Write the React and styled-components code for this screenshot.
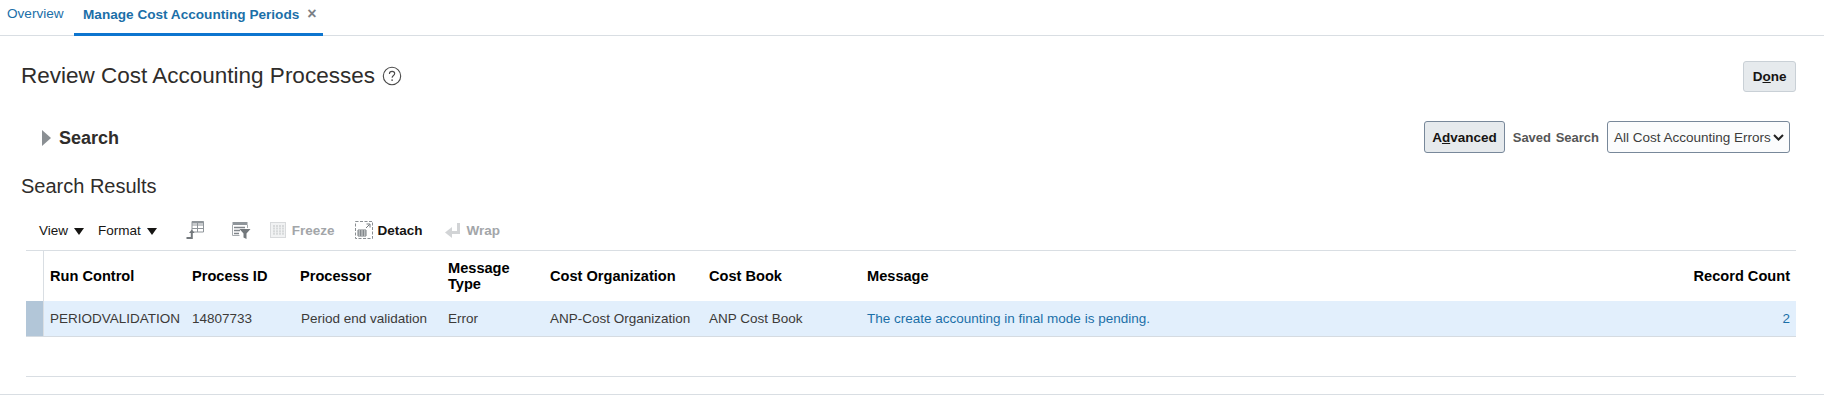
import styled, { createGlobalStyle } from "styled-components";

const GlobalStyle = createGlobalStyle`
  html, body {
    margin: 0;
    padding: 0;
    background: #fff;
    font-family: "Liberation Sans", Arial, sans-serif;
  }
`;

const columns = [
  { key: "runControl", label: "Run Control", value: "PERIODVALIDATION" },
  { key: "processId", label: "Process ID", value: "14807733" },
  { key: "processor", label: "Processor", value: "Period end validation", nudge: 1 },
  { key: "messageType", label: "Message Type", value: "Error", narrow: true },
  { key: "costOrg", label: "Cost Organization", value: "ANP-Cost Organization" },
  { key: "costBook", label: "Cost Book", value: "ANP Cost Book" },
  { key: "message", label: "Message", value: "The create accounting in final mode is pending.", link: true },
  { key: "recordCount", label: "Record Count", value: "2", link: true, right: true },
];

const HelpIcon = () => (
  <svg width="20" height="20" viewBox="0 0 20 20" fill="none">
    <circle cx="10" cy="10" r="8.7" stroke="#4a4a4a" strokeWidth="1.1" />
    <path d="M7.4 7.9c0-1.6 1.2-2.5 2.7-2.5s2.6.9 2.6 2.2c0 1.9-2.6 2-2.6 4.2" stroke="#4a4a4a" strokeWidth="1.1" />
    <rect x="9.4" y="13.4" width="1.4" height="1.5" fill="#4a4a4a" />
  </svg>
);

const ColumnsIcon = () => (
  <svg width="18" height="18" viewBox="0 0 18 18" fill="none">
    <path d="M6 .5h11.5v10.5H6z M6 4h11.5 M6 7.5h11.5 M11.5 .5v10.5" stroke="#8f959a" />
    <path d="M6 .5h11.5V2.5H6z" fill="#8f959a" />
    <path d="M.5 17h5.3v-6" stroke="#73787c" strokeWidth="2" />
    <path d="M3 12l2.8-3.5L8.6 12z" fill="#73787c" />
  </svg>
);

const FilterIcon = () => (
  <svg width="19" height="17" viewBox="0 0 19 17" fill="none">
    <path d="M.5 0h15v3H.5z" fill="#8f959a" />
    <path d="M.5 3v10.5h7 M15.5 3v3" stroke="#a6abaf" />
    <path d="M2 5.5h11 M2 8.5h6 M2 11.5h5" stroke="#80858a" strokeWidth="1.4" />
    <path d="M7.5 7h11l-4 4.5V17l-3-1.5v-4z" fill="#73787c" />
  </svg>
);

const FreezeIcon = () => (
  <svg width="16" height="16" viewBox="0 0 16 16" fill="none">
    <rect x="0.5" y="0.5" width="15" height="15" fill="#f1f2f3" stroke="#d8dadc" />
    <path d="M4 3v10 M7 3v10 M10 3v10 M13 3v10" stroke="#c6c9cb" strokeWidth="1.2" strokeDasharray="2 .6" />
  </svg>
);

const DetachIcon = () => (
  <svg width="18" height="18" viewBox="0 0 18 18" fill="none">
    <rect x="0.5" y="0.5" width="17" height="17" stroke="#8a8f93" strokeDasharray="3 1.5" />
    <path d="M3 9h8v6H3z M3 11h8 M3 13h8 M5.7 9v6 M8.3 9v6" stroke="#777c80" />
    <path d="M11 7l3.5-3.5 M11.5 3H15v3.5" stroke="#777c80" />
  </svg>
);

const WrapIcon = () => (
  <svg width="16" height="16" viewBox="0 0 16 16" fill="none">
    <path d="M13.5 1v9.5H6" stroke="#d2d4d6" strokeWidth="3" />
    <path d="M7 5v11L0 10.500z" fill="#d2d4d6" />
  </svg>
);

const Caret = () => (
  <svg width="10" height="7" viewBox="0 0 10 7">
    <path d="M0 0h10L5 7z" fill="#161513" />
  </svg>
);

const App = () => (
  <Page>
    <GlobalStyle />
    <TabBar>
      <Tab>Overview</Tab>
      <Tab $active>
        Manage Cost Accounting Periods
        <CloseMark>×</CloseMark>
      </Tab>
    </TabBar>

    <TitleRow>
      <TitleGroup>
        <Title>Review Cost Accounting Processes</Title>
        <HelpIcon />
      </TitleGroup>
      <Button $flat>
        D<u>o</u>ne
      </Button>
    </TitleRow>

    <SearchRow>
      <SearchToggle>
        <DisclosureArrow />
        <SearchLabel>Search</SearchLabel>
      </SearchToggle>
      <SearchControls>
        <Button>
          A<u>d</u>vanced
        </Button>
        <SavedLabel>Saved Search</SavedLabel>
        <SavedSelect>
          All Cost Accounting Errors
          <svg width="11" height="7" viewBox="0 0 11 7" fill="none">
            <path d="M1 1l4.5 4.5L10 1" stroke="#222" strokeWidth="2" />
          </svg>
        </SavedSelect>
      </SearchControls>
    </SearchRow>

    <SectionTitle>Search Results</SectionTitle>

    <Toolbar>
      <MenuItem>
        View <Caret />
      </MenuItem>
      <MenuItem>
        Format <Caret />
      </MenuItem>
      <IconSlot $width={46} $left={15}>
        <ColumnsIcon />
      </IconSlot>
      <IconSlot $width={38} $left={0}>
        <FilterIcon />
      </IconSlot>
      <ToolItem $disabled>
        <FreezeIcon />
        Freeze
      </ToolItem>
      <ToolItem $tight>
        <DetachIcon />
        Detach
      </ToolItem>
      <ToolItem $disabled>
        <WrapIcon />
        Wrap
      </ToolItem>
    </Toolbar>

    <ResultsTable>
      <HeaderRow>
        <SelectorHead />
        {columns.map((col) => (
          <HeaderCell key={col.key} $right={col.right} $narrow={col.narrow}>
            {col.label}
          </HeaderCell>
        ))}
      </HeaderRow>
      <DataRow>
        <SelectorCell />
        {columns.map((col) => (
          <DataCell key={col.key} $link={col.link} $right={col.right} $nudge={col.nudge}>
            {col.value}
          </DataCell>
        ))}
      </DataRow>
    </ResultsTable>

    <TableFooter />
    <PageEnd />
  </Page>
);

export default App;

const gridColumns = "18px 142px 108px 148px 102px 159px 158px 1fr 146px";

const Page = styled.div`
  width: 1824px;
  height: 401px;
  overflow: hidden;
  color: #2f2d2b;
`;

const TabBar = styled.div`
  display: flex;
  height: 35px;
  border-bottom: 1px solid #d9dee3;
`;

const Tab = styled.div`
  height: 36px;
  box-sizing: border-box;
  width: ${(p) => (p.$active ? "249px" : "74px")};
  padding: 5px 0 0 ${(p) => (p.$active ? "9px" : "7px")};
  font-size: 13.6px;
  line-height: 17px;
  white-space: nowrap;
  font-weight: ${(p) => (p.$active ? 700 : 400)};
  color: #1b6fa8;
  border-bottom: ${(p) => (p.$active ? "3px solid #0d75cf" : "none")};
`;

const CloseMark = styled.span`
  margin-left: 8px;
  font-size: 16px;
  line-height: 17px;
  font-weight: 700;
  color: #7c8186;
`;

const TitleRow = styled.div`
  display: flex;
  justify-content: space-between;
  align-items: center;
  height: 40px;
  margin-top: 20px;
  padding: 0 28px 0 21px;
`;

const TitleGroup = styled.div`
  display: flex;
  align-items: center;
  gap: 7px;
`;

const Title = styled.h1`
  margin: 0;
  font-size: 22.5px;
  font-weight: 400;
  color: #2f2d2b;
`;

const Button = styled.button`
  height: ${(p) => (p.$flat ? "31px" : "32px")};
  padding: 0 ${(p) => (p.$flat ? "8.500px" : "7px")};
  font-family: inherit;
  font-size: 13.5px;
  font-weight: 700;
  color: #161513;
  background: #e6eaed;
  border: 1px solid ${(p) => (p.$flat ? "#c9d0d6" : "#78889a")};
  border-radius: 3px;
`;

const SearchRow = styled.div`
  display: flex;
  justify-content: space-between;
  align-items: center;
  height: 32px;
  margin-top: 25px;
  padding-left: 42px;
  padding-right: 34px;
`;

const SearchToggle = styled.div`
  display: flex;
  align-items: center;
  gap: 8px;
  margin-top: 2px;
`;

const DisclosureArrow = styled.span`
  width: 0;
  height: 0;
  border-left: 9px solid #8a8f93;
  border-top: 8px solid transparent;
  border-bottom: 8px solid transparent;
`;

const SearchLabel = styled.span`
  font-size: 18px;
  font-weight: 700;
  color: #2f2d2b;
`;

const SearchControls = styled.div`
  display: flex;
  align-items: center;
`;

const SavedLabel = styled.span`
  margin: 0 8px;
  font-size: 13px;
  font-weight: 700;
  white-space: nowrap;
  color: #565656;
  word-spacing: 1px;
`;

const SavedSelect = styled.div`
  display: flex;
  align-items: center;
  justify-content: space-between;
  box-sizing: border-box;
  width: 183px;
  height: 32px;
  padding: 0 5px 0 6px;
  font-size: 13.5px;
  white-space: nowrap;
  color: #3c3c3c;
  background: #fbfcfd;
  border: 1px solid #78889a;
  border-radius: 3px;
`;

const SectionTitle = styled.h2`
  margin: 21px 0 0 21px;
  font-size: 20px;
  line-height: 24px;
  font-weight: 400;
  color: #2f2d2b;
`;

const Toolbar = styled.div`
  display: flex;
  align-items: center;
  height: 26px;
  margin-top: 19px;
  padding-left: 39px;
  font-size: 13.5px;
`;

const MenuItem = styled.div`
  display: flex;
  align-items: center;
  gap: 6px;
  margin-right: 14px;
  color: #161513;

  svg {
    margin-top: 3px;
  }
`;

const IconSlot = styled.div`
  display: flex;
  align-items: center;
  width: ${(p) => p.$width}px;
  margin-left: ${(p) => p.$left}px;
`;

const ToolItem = styled.div`
  display: flex;
  align-items: center;
  gap: ${(p) => (p.$tight ? "5px" : "6px")};
  margin-right: ${(p) => (p.$tight ? "22px" : "20px")};
  font-weight: 700;
  color: ${(p) => (p.$disabled ? "#a3a6a9" : "#161513")};
`;

const ResultsTable = styled.div`
  margin: 7px 28px 0 26px;
  border-top: 1px solid #d9dee3;
`;

const HeaderRow = styled.div`
  display: grid;
  grid-template-columns: ${gridColumns};
  height: 50px;
`;

const DataRow = styled.div`
  display: grid;
  grid-template-columns: ${gridColumns};
  height: 35px;
  background: #e2effc;
  border-bottom: 1px solid #d5dbe1;
`;

const SelectorHead = styled.div`
  border-right: 1px solid #d9dee3;
`;

const SelectorCell = styled.div`
  background: #b2c6d8;
  border-right: 1px solid #d9dee3;
`;

const HeaderCell = styled.div`
  display: flex;
  align-items: center;
  justify-content: ${(p) => (p.$right ? "flex-end" : "flex-start")};
  padding: 0 ${(p) => (p.$narrow ? "30px" : "6px")} 0 6px;
  font-size: 14.6px;
  line-height: 16px;
  font-weight: 700;
  color: #000;
`;

const DataCell = styled.div`
  display: flex;
  align-items: center;
  justify-content: ${(p) => (p.$right ? "flex-end" : "flex-start")};
  padding: 0 6px 0 ${(p) => 6 + (p.$nudge || 0)}px;
  font-size: 13.5px;
  white-space: nowrap;
  color: ${(p) => (p.$link ? "#1b6fa8" : "#3c3a38")};
`;

const TableFooter = styled.div`
  margin: 39px 28px 0 26px;
  border-top: 1px solid #d9dee3;
`;

const PageEnd = styled.div`
  margin-top: 17px;
  border-top: 1px solid #d9dee3;
`;
